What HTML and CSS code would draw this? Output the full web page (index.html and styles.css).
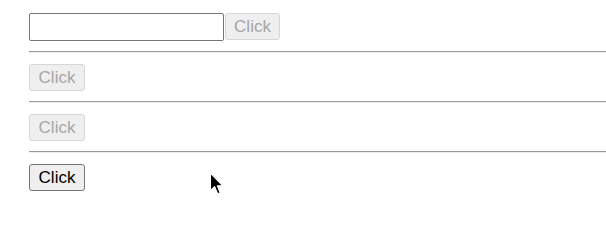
FILE: index.html
```html
<!DOCTYPE html>
<html>
<head>
<meta charset="utf-8">
<link rel="stylesheet" href="styles.css">
</head>
<body>
<div class="page">
  <div class="row first"><input class="field" type="text"><button class="btn" disabled>Click</button></div>
  <hr class="rule">
  <div class="row"><button class="btn" disabled>Click</button></div>
  <hr class="rule">
  <div class="row"><button class="btn" disabled>Click</button></div>
  <hr class="rule">
  <div class="row"><button class="btn">Click</button></div>
</div>
<svg class="cursor" width="16" height="24" viewBox="0 0 14 22">
  <path d="M1 1 L1 17 L4.8 13.4 L7.6 20 L10 19 L7.3 12.6 L12.4 12.6 Z" fill="#000" stroke="#fff" stroke-width="1" stroke-linejoin="round"/>
</svg>
</body>
</html>
```

FILE: styles.css
```css
html, body {
  margin: 0;
  padding: 0;
  background: #fff;
  overflow: hidden;
}
body {
  width: 606px;
  height: 218px;
  position: relative;
  font-family: "Liberation Sans", Arial, sans-serif;
}
.page {
  padding: 13px 0 0 29px;
}
.row {
  display: flex;
  align-items: flex-start;
  height: 27px;
}
.row.first {
  height: 28px;
}
.field {
  box-sizing: border-box;
  width: 195px;
  height: 28px;
  margin: 0 1px 0 0;
  padding: 1px 3px;
  border: 1px solid #767676;
  border-radius: 2px;
  background: #fff;
  font: 16.6px "Liberation Sans", Arial, sans-serif;
}
.btn {
  box-sizing: border-box;
  height: 27px;
  width: 56px;
  margin: 0;
  padding: 0 6px;
  border: 1px solid #767676;
  border-radius: 3px;
  background: #efefef;
  color: #000;
  font: 17px "Liberation Sans", Arial, sans-serif;
  line-height: 25px;
  text-align: center;
}
.row.first .btn {
  width: 55px;
}
.btn:disabled {
  border-color: #d6d6d6;
  color: #a6a6a6;
  background: #efefef;
}
.rule {
  margin: 9.5px 0 11.5px;
  height: 0;
  border: 0;
  border-top: 1px solid #9a9a9a;
  border-bottom: 1px solid #eeeeee;
}
.cursor {
  position: absolute;
  left: 209px;
  top: 172px;
}
```
